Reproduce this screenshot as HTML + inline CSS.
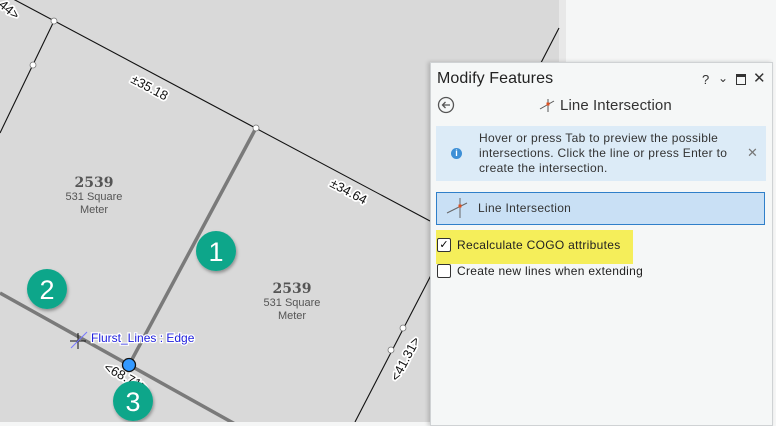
<!DOCTYPE html>
<html><head><meta charset="utf-8"><style>
body{margin:0;width:776px;height:422px;overflow:hidden;position:relative;background:#f5f6f6;font-family:"Liberation Sans",sans-serif}
.map{position:absolute;left:0;top:0;width:559px;height:422px;background:#d9d9d9}
.strip{position:absolute;left:559px;top:0;width:7px;height:422px;background:#e8e8e8}
.panel{position:absolute;left:430px;top:62px;width:341px;height:362px;background:#f5f7f7;border:1px solid #cfd2d4;box-shadow:-2px 0 4px rgba(0,0,0,.18)}
.t{position:absolute;white-space:nowrap;color:#222;letter-spacing:0.1px}
</style></head><body>
<div class="map"></div><div class="strip"></div>
<svg width="776" height="422" style="position:absolute;left:0;top:0">
<defs><filter id="sh" x="-30%" y="-30%" width="160%" height="160%"><feDropShadow dx="1" dy="2" stdDeviation="1.5" flood-opacity="0.35"/></filter></defs>
<g stroke="#111" stroke-width="1.1" fill="none">
<line x1="0" y1="-8" x2="430" y2="221"/>
<line x1="54" y1="21" x2="0" y2="133"/>
<line x1="559" y1="28" x2="355" y2="422"/>
</g>
<g stroke="#7a7a7a" stroke-width="3.5">
<line x1="256" y1="128" x2="129" y2="365"/>
<line x1="0" y1="293" x2="235" y2="424"/>
</g>
<g fill="#fff" stroke="#777" stroke-width="0.8">
<circle cx="54" cy="21" r="3"/><circle cx="33" cy="65" r="3"/><circle cx="256" cy="128" r="3"/>
<circle cx="403" cy="328" r="3"/><circle cx="391" cy="350" r="3"/>
</g>
<g font-family="Liberation Sans" font-size="13" fill="#111" stroke="#fff" stroke-width="3.5" paint-order="stroke" stroke-linejoin="round">
<text transform="translate(130,82) rotate(28)">±35.18</text>
<text transform="translate(329,186) rotate(28)">±34.64</text>
<text transform="translate(103,370) rotate(28)">&lt;68.71&gt;</text>
<text transform="translate(398,382) rotate(-62)">&lt;41.31&gt;</text>
<text transform="translate(-2,6) rotate(40)">44&gt;</text>
</g>
<g font-family="Liberation Sans" text-anchor="middle" fill="#555">
<text x="94" y="187" font-size="14" font-weight="bold" font-family="DejaVu Serif">2539</text>
<text x="94" y="200" font-size="11">531 Square</text>
<text x="94" y="213" font-size="11">Meter</text>
<text x="292" y="293" font-size="14" font-weight="bold" font-family="DejaVu Serif">2539</text>
<text x="292" y="306" font-size="11">531 Square</text>
<text x="292" y="319" font-size="11">Meter</text>
</g>
<g fill="#0ba68a" filter="url(#sh)">
<circle cx="216" cy="251" r="20"/><circle cx="47" cy="289" r="20"/><circle cx="133" cy="401" r="20"/>
</g>
<g font-family="Liberation Sans" font-size="27" fill="#fff" text-anchor="middle">
<text x="216" y="261">1</text><text x="47" y="299">2</text><text x="133" y="411">3</text>
</g>
<circle cx="129" cy="365" r="6.5" fill="#3399ff" stroke="#111" stroke-width="1.3"/>
<g stroke="#111" stroke-width="1"><line x1="70" y1="341" x2="86" y2="341"/><line x1="78" y1="333" x2="78" y2="349"/></g>
<line x1="71" y1="348" x2="87" y2="332" stroke="#7777ff" stroke-width="1"/>
<text x="91" y="342" font-family="Liberation Sans" font-size="12" fill="#2020dd" stroke="#fff" stroke-width="2.5" paint-order="stroke">Flurst_Lines : Edge</text>
</svg>
<div class="panel">
<div class="t" style="left:6px;top:7px;font-size:16px">Modify Features</div>
<div class="t" style="left:271px;top:9px;font-size:13px;color:#333">?</div>
<div class="t" style="left:287px;top:8px;font-size:12px;color:#333">⌄</div>
<div style="position:absolute;left:305px;top:11px;width:8px;height:7px;border:1.5px solid #333;border-top-width:3px"></div>
<div class="t" style="left:322px;top:6px;font-size:15px;color:#333">✕</div>
<svg width="20" height="20" style="position:absolute;left:6px;top:32px"><circle cx="9" cy="10" r="7.5" fill="none" stroke="#555" stroke-width="1.3"/><path d="M13 10H5.5M8.5 7L5.5 10L8.5 13" fill="none" stroke="#555" stroke-width="1.3"/></svg>
<svg width="16" height="16" style="position:absolute;left:108px;top:34px"><line x1="1" y1="12" x2="15" y2="4" stroke="#555"/><line x1="9" y1="2" x2="9" y2="15" stroke="#555"/><rect x="7.5" y="5.5" width="3" height="3" fill="#e05020"/></svg>
<div class="t" style="left:129px;top:34px;font-size:15px;color:#333">Line Intersection</div>
<div style="position:absolute;left:5px;top:63px;width:330px;height:55px;background:#dcebf7"></div>
<div style="position:absolute;left:20px;top:85px;width:11px;height:11px;border-radius:50%;background:#3d8fd6;color:#fff;font-size:9px;font-weight:bold;text-align:center;line-height:11px">i</div>
<div class="t" style="left:48px;top:68px;font-size:12px;line-height:15px;color:#333;letter-spacing:0.3px">Hover or press Tab to preview the possible<br>intersections. Click the line or press Enter to<br>create the intersection.</div>
<div class="t" style="left:316px;top:82px;font-size:13px;color:#777">✕</div>
<div style="position:absolute;left:5px;top:129px;width:327px;height:31px;background:#c9e0f5;border:1px solid #2f7fc9"></div>
<svg width="24" height="24" style="position:absolute;left:14px;top:133px"><line x1="2" y1="17" x2="22" y2="7" stroke="#666"/><line x1="15" y1="2" x2="15" y2="22" stroke="#666"/><rect x="13.5" y="8.5" width="3" height="3" fill="#e05020"/></svg>
<div class="t" style="left:47px;top:138px;font-size:12px;color:#333;letter-spacing:0.3px">Line Intersection</div>
<div style="position:absolute;left:5px;top:167px;width:197px;height:34px;background:#f5ee5a"></div>
<div style="position:absolute;left:6px;top:175px;width:12px;height:12px;border:1px solid #333;border-radius:2px;background:#fff;font-size:11px;line-height:12px;text-align:center">✓</div>
<div class="t" style="left:26px;top:175px;font-size:12px;letter-spacing:0.3px">Recalculate COGO attributes</div>
<div style="position:absolute;left:6px;top:201px;width:12px;height:12px;border:1px solid #333;border-radius:2px;background:#fff"></div>
<div class="t" style="left:26px;top:201px;font-size:12px;letter-spacing:0.3px">Create new lines when extending</div>
</div>
</body></html>
